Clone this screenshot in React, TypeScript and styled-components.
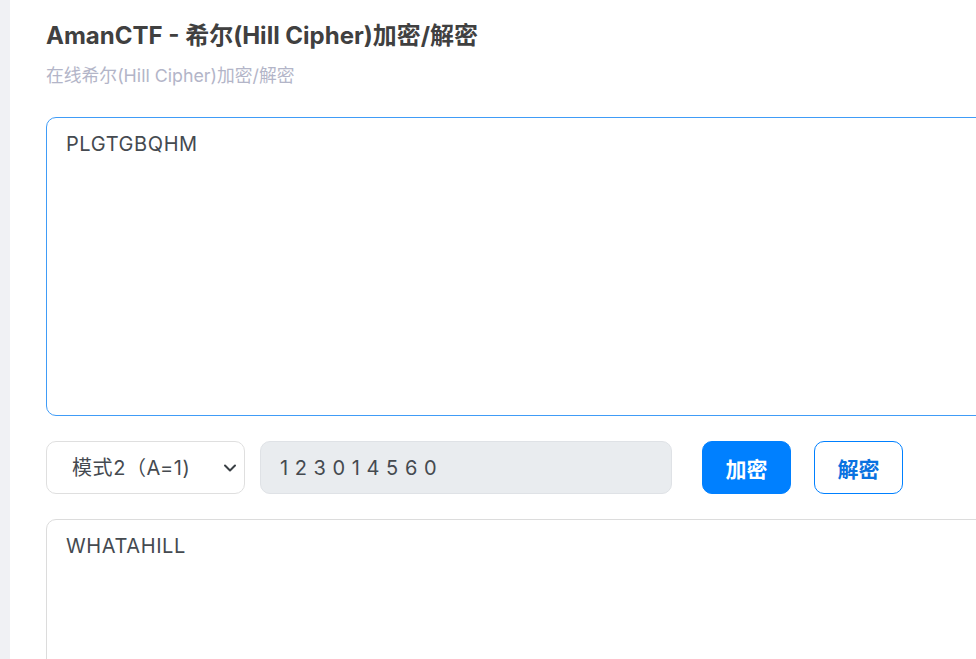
import React, { useState } from "react";
import styled, { createGlobalStyle } from "styled-components";

const GlobalStyle = createGlobalStyle`
  html, body {
    margin: 0;
    padding: 0;
    background: #ffffff;
    overflow: hidden;
  }
  body {
    font-family: Inter, "Noto Sans CJK SC", sans-serif;
  }
`;

const Root = styled.div`
  display: flex;
  height: 659px;
  overflow: hidden;
`;

const SideStrip = styled.div`
  width: 10px;
  flex-shrink: 0;
  background: #f0f1f4;
`;

const Main = styled.div`
  flex: 1;
  min-width: 1100px;
  padding: 18px 0 0 36px;
  box-sizing: border-box;
`;

const Title = styled.h1`
  margin: 0;
  font-size: 24px;
  line-height: 36px;
  font-weight: 700;
  color: #404040;
  font-family: Inter, "Noto Sans CJK SC", sans-serif;
`;

const Subtitle = styled.div`
  margin-top: 9px;
  font-size: 17.8px;
  line-height: 26px;
  color: #b3b5c8;
`;

const TextBox = styled.textarea<{ $active?: boolean }>`
  display: block;
  box-sizing: border-box;
  width: 1000px;
  height: ${(p) => (p.$active ? "299px" : "200px")};
  margin-top: ${(p) => (p.$active ? "28px" : "0")};
  padding: 12px 19px;
  border: 1px solid ${(p) => (p.$active ? "#409cf7" : "#dcdcdc")};
  border-radius: 10px;
  font-family: Inter, "Noto Sans CJK SC", sans-serif;
  font-size: 20px;
  line-height: 28px;
  letter-spacing: 0.6px;
  color: #454a50;
  resize: none;
  outline: none;
`;

const ControlRow = styled.div`
  display: flex;
  align-items: center;
  margin: 25px 0;
`;

const SelectWrap = styled.div`
  position: relative;
  width: 199px;
  height: 53px;
  flex-shrink: 0;
`;

const ModeSelect = styled.select`
  appearance: none;
  width: 100%;
  height: 100%;
  box-sizing: border-box;
  padding: 0 40px 0 25px;
  border: 1px solid #dfdfdf;
  border-radius: 10px;
  background: #ffffff;
  font-family: Inter, "Noto Sans CJK SC", sans-serif;
  font-size: 20px;
  letter-spacing: 0.6px;
  color: #454a50;
  outline: none;
`;

const Chevron = styled.svg`
  position: absolute;
  right: 8px;
  top: 21px;
  width: 14px;
  height: 12px;
  pointer-events: none;
`;

const KeyInput = styled.input`
  box-sizing: border-box;
  width: 412px;
  height: 53px;
  margin-left: 15px;
  padding: 0 19px;
  border: 1px solid #dfe2e6;
  border-radius: 10px;
  background: #e9ecef;
  font-family: Inter, "Noto Sans CJK SC", sans-serif;
  font-size: 20px;
  letter-spacing: 0.5px;
  color: #454a50;
  outline: none;
`;

const ActionButton = styled.button<{ $primary?: boolean }>`
  box-sizing: border-box;
  width: 89px;
  height: 53px;
  margin-left: ${(p) => (p.$primary ? "30px" : "23px")};
  border: 1px solid #0080ff;
  border-radius: 10px;
  background: ${(p) => (p.$primary ? "#0080ff" : "#ffffff")};
  color: ${(p) => (p.$primary ? "#ffffff" : "#0a72e0")};
  font-family: "Noto Sans CJK SC", sans-serif;
  font-size: 21px;
  font-weight: 700;
  cursor: pointer;
`;

export default function App() {
  const [cipher, setCipher] = useState("PLGTGBQHM");
  const [plain, setPlain] = useState("WHATAHILL");
  const [mode, setMode] = useState("2");

  return (
    <>
      <GlobalStyle />
      <Root>
        <SideStrip />
        <Main>
          <Title>AmanCTF - 希尔(Hill Cipher)加密/解密</Title>
          <Subtitle>在线希尔(Hill Cipher)加密/解密</Subtitle>
          <TextBox
            $active
            value={cipher}
            onChange={(e) => setCipher(e.target.value)}
          />
          <ControlRow>
            <SelectWrap>
              <ModeSelect value={mode} onChange={(e) => setMode(e.target.value)}>
                <option value="1">模式1（A=0)</option>
                <option value="2">模式2（A=1)</option>
              </ModeSelect>
              <Chevron viewBox="0 0 14 12">
                <path
                  d="M2 3.5 L7 8.5 L12 3.5"
                  fill="none"
                  stroke="#3a3f44"
                  strokeWidth="2"
                  strokeLinecap="round"
                  strokeLinejoin="round"
                />
              </Chevron>
            </SelectWrap>
            <KeyInput disabled value="1 2 3 0 1 4 5 6 0" readOnly />
            <ActionButton $primary>加密</ActionButton>
            <ActionButton>解密</ActionButton>
          </ControlRow>
          <TextBox value={plain} onChange={(e) => setPlain(e.target.value)} />
        </Main>
      </Root>
    </>
  );
}
